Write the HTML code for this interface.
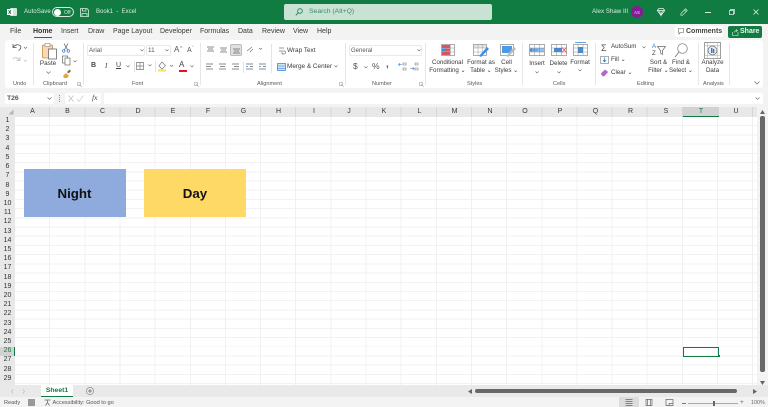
<!DOCTYPE html>
<html><head><meta charset="utf-8">
<style>
html,body{margin:0;padding:0;width:768px;height:407px;overflow:hidden;background:#f3f3f3;font-family:"Liberation Sans",sans-serif;color:#3a3a3a}
.a{position:absolute}
.t{position:absolute;white-space:nowrap;font-size:6.4px;line-height:8px;color:#3a3a3a}
.c{transform:translateX(-50%);text-align:center}
.w{color:#d9ebe0}
.tab{font-size:7px;color:#3a3a3a;top:28px}
.g{font-size:5.6px;top:80px;color:#5a5a5a}
.s{position:absolute;top:43px;width:1px;height:42px;background:#e6e6e6}
.h{font-size:7px;top:108px;color:#333;transform:translateX(-50%)}
.r{font-size:7px;left:2px;width:11px;text-align:center;color:#333}
svg{position:absolute;overflow:visible}
</style></head><body>
<div class="a" style="left:0;top:0;width:768px;height:24px;background:#107c41"></div>
<svg style="left:7px;top:7px" width="10" height="10" viewBox="0 0 10 10"><rect x="3" y="1" width="7" height="8" rx="1" fill="#cfe6d8"/><rect x="0" y="2" width="6" height="6" fill="#fff"/><path d="M1.5 3.3l2.5 3.4M4 3.3L1.5 6.7" stroke="#107c41" stroke-width=".9"/></svg>
<span class="t w" style="left:24px;top:8px;font-size:6.200px">AutoSave</span>
<div class="a" style="left:52px;top:7px;width:22px;height:10px;border:1px solid #d9ebe0;border-radius:6px;box-sizing:border-box"></div>
<div class="a" style="left:54px;top:8.500px;width:7px;height:7px;background:#fff;border-radius:50%"></div>
<span class="t w" style="left:64px;top:8.500px;font-size:5px">Off</span>
<svg style="left:80px;top:8px" width="9" height="9" viewBox="0 0 9 9"><path d="M.5.5h6.500l1.500 1.500v6.500h-8zM2.500.5v2.500h3.500v-2.500M2 8.500v-3h5v3" fill="none" stroke="#d9ebe0" stroke-width=".8"/></svg>
<span class="t w" style="left:96px;top:8px;font-size:6px">Book1&nbsp; -&nbsp; Excel</span>
<div class="a" style="left:284px;top:4px;width:208px;height:16px;background:#c8e3d3;border-radius:2px"></div>
<svg style="left:295px;top:8px" width="8" height="8" viewBox="0 0 8 8"><circle cx="5" cy="3" r="2.300" fill="none" stroke="#107c41" stroke-width=".8"/><path d="M3.300 4.700L.8 7.300" stroke="#107c41" stroke-width=".8"/></svg>
<span class="t" style="left:309px;top:8px;font-size:6.800px;color:#3f8a62">Search (Alt+Q)</span>
<span class="t w" style="left:592px;top:8px;font-size:6.200px">Alex Shaw III</span>
<div class="a" style="left:631px;top:6px;width:12px;height:12px;border-radius:50%;background:#861b97"></div>
<span class="t c" style="left:637px;top:8.500px;font-size:4.500px;color:#e6cfe9">AS</span>
<svg style="left:657px;top:8px" width="8" height="8" viewBox="0 0 8 8"><path d="M1.800.5h4.400L7.700 2.500 4 7.500.3 2.500zM.3 2.500h7.400M2.500 2.500L4 7.500l1.500-5" fill="none" stroke="#e8f3ec" stroke-width=".8"/></svg>
<svg style="left:680px;top:8px" width="8" height="8" viewBox="0 0 8 8"><path d="M1 5.500L5.500.8l1.700 1.700-4.700 4.700H.8zM4.500 2l1.700 1.700" fill="none" stroke="#d9ebe0" stroke-width=".7"/></svg>
<div class="a" style="left:705px;top:12px;width:6px;height:1px;background:#d9ebe0"></div>
<svg style="left:729px;top:9px" width="6" height="6" viewBox="0 0 6 6"><path d="M.5 1.500h4v4h-4zM1.500 1.500V.5h4v4h-1" fill="none" stroke="#e3f0e8" stroke-width=".7"/></svg>
<svg style="left:753px;top:9px" width="6" height="6" viewBox="0 0 6 6"><path d="M.5.5l5 5M5.500.5l-5 5" stroke="#e3f0e8" stroke-width=".8"/></svg>

<span class="t tab" style="left:10px">File</span>
<span class="t tab" style="left:33px;font-weight:bold;color:#333">Home</span>
<div class="a" style="left:34px;top:37px;width:18px;height:1px;background:#107c41"></div>
<span class="t tab" style="left:61px">Insert</span>
<span class="t tab" style="left:88px">Draw</span>
<span class="t tab" style="left:113px">Page Layout</span>
<span class="t tab" style="left:160px">Developer</span>
<span class="t tab" style="left:200px">Formulas</span>
<span class="t tab" style="left:238px">Data</span>
<span class="t tab" style="left:262px">Review</span>
<span class="t tab" style="left:293px">View</span>
<span class="t tab" style="left:317px">Help</span>
<div class="a" style="left:675px;top:26px;width:48px;height:11px;background:#fff;border-radius:2px"></div>
<svg style="left:678px;top:28px" width="7" height="7" viewBox="0 0 7 7"><path d="M.5.5h5v4H2.500L1 6V4.500H.5z" fill="none" stroke="#666" stroke-width=".6"/></svg>
<span class="t" style="left:686px;top:27.500px;font-size:7px;font-weight:bold;color:#444">Comments</span>
<div class="a" style="left:728px;top:26px;width:34px;height:12px;background:#107c41;border-radius:2px"></div>
<svg style="left:732px;top:28.500px" width="7" height="7" viewBox="0 0 7 7"><path d="M.5 3v3.500h5.500V3M2.500 3.500C2.500 2 4 1.500 5 1.500M4 .3l1.500 1.200L4 2.800" fill="none" stroke="#e3f0e8" stroke-width=".6"/></svg>
<span class="t" style="left:740px;top:28px;font-size:7px;font-weight:bold;color:#eef7f2">Share</span>

<div class="a" style="left:5px;top:40px;width:758px;height:48px;background:#fff;border-radius:3px"></div>
<div class="s" style="left:33px"></div><div class="s" style="left:83px"></div><div class="s" style="left:200px"></div><div class="s" style="left:345px"></div><div class="s" style="left:425px"></div><div class="s" style="left:522px"></div><div class="s" style="left:595px"></div><div class="s" style="left:698px"></div><div class="s" style="left:729px"></div>
<span class="t g" style="left:13px">Undo</span>
<span class="t g" style="left:43px">Clipboard</span>
<span class="t g" style="left:132px">Font</span>
<span class="t g" style="left:257px">Alignment</span>
<span class="t g" style="left:372px">Number</span>
<span class="t g" style="left:467px">Styles</span>
<span class="t g" style="left:553px">Cells</span>
<span class="t g" style="left:637px">Editing</span>
<span class="t g" style="left:703px">Analysis</span>

<!-- undo -->
<svg style="left:12px;top:43px" width="20" height="22" viewBox="0 0 20 22"><path d="M1 1v3.500h3.500M1.500 4C3 1.500 7 1 8.500 3c1 1.500 0 3.500-2 4.500" fill="none" stroke="#555" stroke-width=".8"/><path d="M8 14v3.500H4.500M7.500 17c-1.500-2.500-5-3-6.500-1" fill="none" stroke="#bbb" stroke-width=".8"/><path d="M12 4l1.500 1.500L15 4" fill="none" stroke="#666" stroke-width=".6"/><path d="M12 17l1.500 1.500L15 17" fill="none" stroke="#bbb" stroke-width=".6"/></svg>
<!-- clipboard -->
<svg style="left:42px;top:43px" width="16" height="17" viewBox="0 0 16 17"><rect x=".5" y="2" width="10" height="13" rx="1" fill="#f7d9b5" stroke="#c98a3c" stroke-width=".8"/><rect x="3" y=".5" width="5" height="3" fill="#fff" stroke="#888" stroke-width=".6"/><rect x="6.500" y="6" width="8" height="10" fill="#fff" stroke="#666" stroke-width=".8"/></svg>
<span class="t c" style="left:48px;top:60px;font-size:6.400px">Paste</span>
<svg style="left:46px;top:71px" width="5" height="3" viewBox="0 0 5 3"><path d="M.5.5l2 2 2-2" fill="none" stroke="#666" stroke-width=".6"/></svg>
<svg style="left:62px;top:43px" width="15" height="36" viewBox="0 0 15 36"><path d="M2 .5l4 7M6 .5l-4 7" stroke="#555" stroke-width=".7"/><circle cx="1.700" cy="8" r="1.300" fill="none" stroke="#2b7cd3" stroke-width=".7"/><circle cx="6.300" cy="8" r="1.300" fill="none" stroke="#2b7cd3" stroke-width=".7"/><rect x=".5" y="13" width="5" height="7" fill="#fff" stroke="#666" stroke-width=".7"/><rect x="3" y="15" width="5" height="7" fill="#fff" stroke="#666" stroke-width=".7"/><path d="M11.500 17.500l1.500 1.500 1.500-1.500" fill="none" stroke="#666" stroke-width=".6"/><path d="M1 33l3-3 3 3-2 2H2z" fill="#e8a33d"/><path d="M5 29l2.500-2.500L9 28l-2.500 2.500z" fill="#8a6a3a"/></svg>
<!-- font -->
<div class="a" style="left:87px;top:45px;width:58px;height:11px;border:1px solid #e9e9e9;border-radius:2px;box-sizing:border-box"></div>
<span class="t" style="left:89px;top:47px;color:#555">Arial</span>
<div class="a" style="left:146px;top:45px;width:25px;height:11px;border:1px solid #e9e9e9;border-radius:2px;box-sizing:border-box"></div>
<span class="t" style="left:148px;top:47px;color:#555">11</span>
<svg style="left:140px;top:49px" width="30" height="3" viewBox="0 0 30 3"><path d="M.5.5l1.500 1.500L3.500.5M25.500.5l1.500 1.500L28.500.5" fill="none" stroke="#666" stroke-width=".6"/></svg>
<span class="t" style="left:174px;top:46px;font-size:8px;color:#555">A</span><span class="t" style="left:180px;top:45px;font-size:5px;color:#2b7cd3">^</span>
<span class="t" style="left:187px;top:47px;font-size:7px;color:#555">A</span><span class="t" style="left:192px;top:45px;font-size:5px;color:#2b7cd3">ˇ</span>
<span class="t" style="left:91px;top:62px;font-size:7px;font-weight:bold;color:#444">B</span>
<span class="t" style="left:105px;top:62px;font-size:7px;font-style:italic;font-family:'Liberation Serif',serif;color:#444">I</span>
<span class="t" style="left:116px;top:62px;font-size:7px;text-decoration:underline;color:#444">U</span>
<svg style="left:126px;top:65px" width="5" height="3" viewBox="0 0 5 3"><path d="M.5.5l1.500 1.500L3.500.5" fill="none" stroke="#666" stroke-width=".6"/></svg>
<div class="a" style="left:134px;top:61px;width:1px;height:11px;background:#e3e3e3"></div>
<svg style="left:136px;top:62px" width="18" height="8" viewBox="0 0 18 8"><path d="M.5.5h7v7h-7zM4 .5v7M.5 4h7" fill="none" stroke="#777" stroke-width=".7"/><path d="M12.500 2.500l1.500 1.500 1.500-1.500" fill="none" stroke="#666" stroke-width=".6"/></svg>
<div class="a" style="left:155px;top:61px;width:1px;height:11px;background:#e3e3e3"></div>
<svg style="left:158px;top:61px" width="18" height="11" viewBox="0 0 18 11"><path d="M4 1l3.500 3.500L4 8 .8 4.800z" fill="none" stroke="#777" stroke-width=".7"/><rect x="0" y="8.500" width="8" height="2" fill="#ffd966"/><path d="M12 4l1.500 1.500L15 4" fill="none" stroke="#666" stroke-width=".6"/></svg>
<span class="t" style="left:179px;top:61px;font-size:8px;color:#444">A</span>
<div class="a" style="left:179px;top:69.500px;width:8px;height:2px;background:#e81123"></div>
<svg style="left:190px;top:65px" width="5" height="3" viewBox="0 0 5 3"><path d="M.5.5l1.500 1.500L3.500.5" fill="none" stroke="#666" stroke-width=".6"/></svg>
<svg style="left:77px;top:82px" width="5" height="5" viewBox="0 0 5 5"><path d="M.5.5h3v3h-3zM2 2l3 3" fill="none" stroke="#888" stroke-width=".5"/></svg>
<svg style="left:194px;top:82px" width="5" height="5" viewBox="0 0 5 5"><path d="M.5.5h3v3h-3zM2 2l3 3" fill="none" stroke="#888" stroke-width=".5"/></svg>
<!-- align -->
<div class="a" style="left:230px;top:44px;width:12px;height:12px;background:#e0e0e0;border:1px solid #bbb;border-radius:2px;box-sizing:border-box"></div>
<svg style="left:206px;top:46px" width="60" height="28" viewBox="0 0 60 28" stroke="#666" stroke-width=".7" fill="none"><path d="M1 1h7M2 3h5M1 5h7M14 2h7M15 4h5M14 6h7M27 3h7M28 5h5M27 7h7"/><path d="M0 18h7M0 20.500h5M0 23h7M13 18h7M14 20.500h5M13 23h7M26 18h7M28 20.500h5M26 23h7"/><path d="M40 18h7M44 20.500h3M40 23h7M53 18h7M57 20.500h3M53 23h7"/><path d="M40 20.500l2 0" stroke="#2b7cd3"/><path d="M53 20.500l2 0" stroke="#2b7cd3"/><path d="M41 5l5-4M44 6l3-3" stroke="#777"/><path d="M53 2l1.500 1.500L56 2" stroke="#666" stroke-width=".6"/></svg>
<div class="a" style="left:243px;top:62px;width:1px;height:11px;background:#e3e3e3"></div>
<div class="a" style="left:271px;top:44px;width:1px;height:29px;background:#e3e3e3"></div>
<svg style="left:278px;top:47px" width="8" height="8" viewBox="0 0 8 8"><path d="M1 1h5M1 4h5a1.500 1.500 0 010 3H4" fill="none" stroke="#777" stroke-width=".7"/><path d="M3 6l1.500 1-.2-2" fill="#2b7cd3"/></svg>
<span class="t" style="left:287px;top:47px;font-size:6.400px">Wrap Text</span>
<svg style="left:277px;top:63px" width="9" height="8" viewBox="0 0 9 8"><rect x=".5" y=".5" width="8" height="7" fill="#cfe3f5" stroke="#2b7cd3" stroke-width=".7"/><path d="M.5 3h8M.5 5.500h8" stroke="#2b7cd3" stroke-width=".6"/></svg>
<span class="t" style="left:287px;top:63px;font-size:6.400px">Merge &amp; Center</span>
<svg style="left:334px;top:65px" width="5" height="3" viewBox="0 0 5 3"><path d="M.5.5l1.500 1.500L3.500.5" fill="none" stroke="#666" stroke-width=".6"/></svg>
<svg style="left:339px;top:82px" width="5" height="5" viewBox="0 0 5 5"><path d="M.5.5h3v3h-3zM2 2l3 3" fill="none" stroke="#888" stroke-width=".5"/></svg>
<!-- number -->
<div class="a" style="left:349px;top:45px;width:73px;height:11px;border:1px solid #e9e9e9;border-radius:2px;box-sizing:border-box"></div>
<span class="t" style="left:351px;top:47px;font-size:6px;color:#555">General</span>
<svg style="left:417px;top:49px" width="5" height="3" viewBox="0 0 5 3"><path d="M.5.5l1.500 1.500L3.500.5" fill="none" stroke="#666" stroke-width=".6"/></svg>
<span class="t" style="left:353px;top:62px;font-size:8.500px;color:#555">$</span>
<svg style="left:364px;top:66px" width="5" height="3" viewBox="0 0 5 3"><path d="M.5.5l1.500 1.500L3.500.5" fill="none" stroke="#666" stroke-width=".6"/></svg>
<span class="t" style="left:372px;top:62px;font-size:8.500px;color:#555">%</span>
<span class="t" style="left:386px;top:61px;font-size:10px;font-weight:bold;color:#555">,</span>
<svg style="left:398px;top:62px" width="22" height="9" viewBox="0 0 22 9" fill="none" stroke="#777" stroke-width=".6"><path d="M5 1h3v2H5zM5 6h3v2H5zM17 1h3v2h-3zM17 6h3v2h-3z"/><path d="M4 2.500H.5M1.800 1.200L.5 2.500l1.300 1.300M16 6.500h-4M14.700 5.200L16 6.500l-1.300 1.300" stroke="#2b7cd3"/></svg>
<svg style="left:419px;top:82px" width="5" height="5" viewBox="0 0 5 5"><path d="M.5.5h3v3h-3zM2 2l3 3" fill="none" stroke="#888" stroke-width=".5"/></svg>
<!-- styles -->
<svg style="left:441px;top:44px" width="14" height="12" viewBox="0 0 14 12"><rect x=".5" y=".5" width="13" height="11" fill="#fff" stroke="#777" stroke-width=".6"/><rect x="1" y="1" width="8" height="3" fill="#e8505b"/><rect x="1" y="4.500" width="4" height="3" fill="#3a8ee6"/><rect x="5" y="4.500" width="4" height="3" fill="#e8505b"/><rect x="1" y="8" width="8" height="3" fill="#e8505b"/><path d="M5 .5v11M9.500.5v11M.5 4h13M.5 8h13" stroke="#777" stroke-width=".4"/></svg>
<span class="t c" style="left:447.500px;top:59px;font-size:6.200px">Conditional</span>
<span class="t c" style="left:447.500px;top:67px;font-size:6.200px">Formatting ⌄</span>
<svg style="left:473px;top:44px" width="16" height="13" viewBox="0 0 16 13"><rect x=".5" y=".5" width="13" height="11" fill="#fff" stroke="#777" stroke-width=".6"/><rect x="1" y="1" width="12" height="3" fill="#dbe7f3"/><path d="M5 .5v11M9.500.5v11M.5 4h13M.5 8h13" stroke="#888" stroke-width=".4"/><path d="M6 12l8-9 2 2-8 8z" fill="#3a8ee6"/></svg>
<span class="t c" style="left:481px;top:59px;font-size:6.200px">Format as</span>
<span class="t c" style="left:481px;top:67px;font-size:6.200px">Table ⌄</span>
<svg style="left:500px;top:44px" width="16" height="13" viewBox="0 0 16 13"><rect x=".5" y=".5" width="13" height="11" fill="#fff" stroke="#777" stroke-width=".6"/><rect x="2" y="2" width="10" height="7" fill="#4a9ae8"/><path d="M6 12l8-9 2 2-8 8z" fill="#bbb"/></svg>
<span class="t c" style="left:506.500px;top:59px;font-size:6.200px">Cell</span>
<span class="t c" style="left:506.500px;top:67px;font-size:6.200px">Styles ⌄</span>
<!-- cells -->
<svg style="left:529px;top:44px" width="16" height="12" viewBox="0 0 16 12"><rect x=".5" y=".5" width="15" height="11" fill="#fff" stroke="#777" stroke-width=".6"/><rect x="1" y="4" width="14" height="4" fill="#8ec1ef"/><path d="M5.500.5v11M10.500.5v11M.5 4h15M.5 8h15" stroke="#777" stroke-width=".4"/><path d="M9 6H1M3 4.500L1 6l2 1.500" fill="none" stroke="#2b7cd3" stroke-width=".7"/></svg>
<span class="t c" style="left:537px;top:60px;font-size:6.200px">Insert</span>
<svg style="left:535px;top:71px" width="5" height="3" viewBox="0 0 5 3"><path d="M.5.5l1.500 1.500L3.500.5" fill="none" stroke="#666" stroke-width=".6"/></svg>
<svg style="left:551px;top:44px" width="16" height="12" viewBox="0 0 16 12"><rect x=".5" y=".5" width="15" height="11" fill="#fff" stroke="#777" stroke-width=".6"/><rect x="3" y="4" width="8" height="4" fill="#3a8ee6"/><path d="M5.500.5v11M10.500.5v11M.5 4h15M.5 8h15" stroke="#777" stroke-width=".4"/><path d="M11 3.500l4.500 5M15.500 3.500l-4.500 5" stroke="#e8505b" stroke-width=".9"/></svg>
<span class="t c" style="left:558.500px;top:60px;font-size:6.200px">Delete</span>
<svg style="left:557px;top:71px" width="5" height="3" viewBox="0 0 5 3"><path d="M.5.5l1.500 1.500L3.500.5" fill="none" stroke="#666" stroke-width=".6"/></svg>
<svg style="left:573px;top:42px" width="15" height="14" viewBox="0 0 15 14"><path d="M2 .5h11" stroke="#2b7cd3" stroke-width=".7"/><rect x=".5" y="2.500" width="14" height="11" fill="#fff" stroke="#777" stroke-width=".6"/><rect x="5" y="5" width="5" height="6" fill="#3a8ee6"/><path d="M5 2.500v11M10 2.500v11M.5 6h14M.5 10h14" stroke="#777" stroke-width=".4"/></svg>
<span class="t c" style="left:580px;top:59px;font-size:6.200px">Format</span>
<svg style="left:578px;top:69px" width="5" height="3" viewBox="0 0 5 3"><path d="M.5.5l1.500 1.500L3.500.5" fill="none" stroke="#666" stroke-width=".6"/></svg>
<!-- editing -->
<span class="t" style="left:601px;top:43px;font-size:9px;line-height:10px;color:#555">Σ</span>
<span class="t" style="left:611px;top:43px;font-size:6.200px">AutoSum</span>
<svg style="left:642px;top:46px" width="5" height="3" viewBox="0 0 5 3"><path d="M.5.5l1.500 1.500L3.500.5" fill="none" stroke="#666" stroke-width=".6"/></svg>
<svg style="left:600px;top:56px" width="9" height="8" viewBox="0 0 9 8"><rect x=".5" y=".5" width="8" height="7" fill="#fff" stroke="#777" stroke-width=".6"/><path d="M4.500 1.500v4M2.800 4l1.700 1.800L6.200 4" fill="none" stroke="#2b7cd3" stroke-width=".8"/></svg>
<span class="t" style="left:611px;top:56px;font-size:6.200px">Fill ⌄</span>
<svg style="left:600px;top:68px" width="9" height="9" viewBox="0 0 9 9"><path d="M.8 5.500L5 1.500l3.200 2.500-4 4.200H2.500z" fill="#b565c9"/></svg>
<span class="t" style="left:611px;top:69px;font-size:6.200px">Clear ⌄</span>
<span class="t" style="left:652px;top:43px;font-size:6.200px;color:#2b7cd3;line-height:7px">A</span>
<span class="t" style="left:652px;top:50px;font-size:6.200px;line-height:7px;color:#444">Z</span>
<svg style="left:657px;top:46px" width="9" height="9" viewBox="0 0 9 9"><path d="M.5.500h8L5.500 4.500v4L3.500 7V4.500z" fill="none" stroke="#666" stroke-width=".7"/></svg>
<svg style="left:674px;top:43px" width="14" height="15" viewBox="0 0 14 15"><circle cx="8.500" cy="5.500" r="4.800" fill="none" stroke="#777" stroke-width=".7"/><path d="M5 9l-4 5" stroke="#777" stroke-width=".9"/></svg>
<span class="t c" style="left:658.500px;top:59px;font-size:6.200px">Sort &amp;</span>
<span class="t c" style="left:658.500px;top:67px;font-size:6.200px">Filter ⌄</span>
<span class="t c" style="left:681px;top:59px;font-size:6.200px">Find &amp;</span>
<span class="t c" style="left:681px;top:67px;font-size:6.200px">Select ⌄</span>
<!-- analyze -->
<svg style="left:704px;top:42px" width="17" height="17" viewBox="0 0 17 17"><rect x=".5" y=".5" width="16" height="16" fill="#fff" stroke="#777" stroke-width=".7"/><path d="M.5 3.500h16M.5 13.500h16M3.500.5v16M13.500.5v16" stroke="#999" stroke-width=".4"/><circle cx="8.500" cy="8.500" r="4.500" fill="#e8eef5" stroke="#666" stroke-width=".7"/><rect x="7" y="6" width="1.500" height="5" fill="#2b7cd3"/><rect x="9" y="7" width="1.300" height="4" fill="#666"/></svg>
<span class="t c" style="left:712.500px;top:59px;font-size:6.200px">Analyze</span>
<span class="t c" style="left:712.500px;top:67px;font-size:6.200px">Data</span>
<svg style="left:754px;top:81px" width="6" height="4" viewBox="0 0 6 4"><path d="M.5.500L3 3 5.500.5" fill="none" stroke="#666" stroke-width=".7"/></svg>

<!-- formula bar -->
<div class="a" style="left:5px;top:93px;width:49px;height:11px;background:#fff;border-radius:2px"></div>
<span class="t" style="left:7px;top:94.500px;font-size:6.800px;font-weight:bold;color:#555">T26</span>
<svg style="left:47px;top:97px" width="5" height="3" viewBox="0 0 5 3"><path d="M.5.5l2 1.800 2-1.800" fill="none" stroke="#666" stroke-width=".6"/></svg>
<div class="a" style="left:59px;top:95px;width:1px;height:7px;border-left:1px dotted #888"></div>
<div class="a" style="left:65px;top:93px;width:36px;height:11px;background:#fff;border-radius:2px"></div>
<svg style="left:68px;top:95px" width="16" height="7" viewBox="0 0 16 7"><path d="M.5.500l5 6M5.500.500l-5 6" stroke="#bbb" stroke-width=".6"/><path d="M9 4l2 2.500L15.500.5" fill="none" stroke="#bbb" stroke-width=".6"/></svg>
<span class="t" style="left:92px;top:94px;font-size:7.500px;font-style:italic;font-family:'Liberation Serif',serif;color:#444">fx</span>
<div class="a" style="left:104px;top:93px;width:659px;height:11px;background:#fff;border-radius:2px"></div>
<svg style="left:755px;top:97px" width="5" height="3" viewBox="0 0 5 3"><path d="M.5.5l2 1.800 2-1.800" fill="none" stroke="#666" stroke-width=".6"/></svg>

<!-- grid -->
<div class="a" style="left:15px;top:116.500px;width:742px;height:268.500px;background-color:#fff;background-image:repeating-linear-gradient(to right,transparent 0,transparent 34.150px,#f0f0f0 34.150px,#f0f0f0 35.150px),repeating-linear-gradient(to bottom,transparent 0,transparent 8.210px,#f2f2f2 8.210px,#f2f2f2 9.210px)"></div>
<div class="a" style="left:0;top:107px;width:15px;height:278px;background:#e8e8e8"></div>
<div class="a" style="left:15px;top:107px;width:742px;height:9.500px;background:#e8e8e8;background-image:repeating-linear-gradient(to right,transparent 0,transparent 34.150px,#d6d6d6 34.150px,#d6d6d6 35.150px)"></div>
<svg style="left:8px;top:109px" width="6" height="6" viewBox="0 0 6 6"><path d="M5.500.5v5h-5z" fill="#b5b5b5"/></svg>
<div class="a" style="left:683px;top:107px;width:36px;height:9.500px;background:#d2d2d2;border-bottom:1px solid #107c41;box-sizing:border-box"></div>
<div class="a" style="left:0;top:346.500px;width:15px;height:9.500px;background:#d2d2d2;border-right:1px solid #107c41;box-sizing:border-box"></div>

<span class="t h" style="left:32.500px">A</span><span class="t h" style="left:67.500px">B</span><span class="t h" style="left:102.500px">C</span><span class="t h" style="left:138px">D</span><span class="t h" style="left:173px">E</span><span class="t h" style="left:208px">F</span><span class="t h" style="left:243.500px">G</span><span class="t h" style="left:278.500px">H</span><span class="t h" style="left:314px">I</span><span class="t h" style="left:349px">J</span><span class="t h" style="left:384px">K</span><span class="t h" style="left:419.500px">L</span><span class="t h" style="left:454.500px">M</span><span class="t h" style="left:490px">N</span><span class="t h" style="left:525px">O</span><span class="t h" style="left:560px">P</span><span class="t h" style="left:595.500px">Q</span><span class="t h" style="left:630.500px">R</span><span class="t h" style="left:666px">S</span><span class="t h" style="left:701px;color:#107c41">T</span><span class="t h" style="left:736px">U</span>

<span class="t r" style="top:117px">1</span><span class="t r" style="top:126.200px">2</span><span class="t r" style="top:135.400px">3</span><span class="t r" style="top:144.600px">4</span><span class="t r" style="top:153.800px">5</span><span class="t r" style="top:163px">6</span><span class="t r" style="top:172.300px">7</span><span class="t r" style="top:181.500px">8</span><span class="t r" style="top:190.700px">9</span><span class="t r" style="top:199.900px">10</span><span class="t r" style="top:209.100px">11</span><span class="t r" style="top:218.300px">12</span><span class="t r" style="top:227.500px">13</span><span class="t r" style="top:236.700px">14</span><span class="t r" style="top:245.900px">15</span><span class="t r" style="top:255.200px">16</span><span class="t r" style="top:264.400px">17</span><span class="t r" style="top:273.600px">18</span><span class="t r" style="top:282.800px">19</span><span class="t r" style="top:292px">20</span><span class="t r" style="top:301.200px">21</span><span class="t r" style="top:310.400px">22</span><span class="t r" style="top:319.600px">23</span><span class="t r" style="top:328.800px">24</span><span class="t r" style="top:338px">25</span><span class="t r" style="top:347.200px;color:#107c41">26</span><span class="t r" style="top:356.400px">27</span><span class="t r" style="top:365.700px">28</span><span class="t r" style="top:374.900px">29</span>

<!-- shapes -->
<div class="a" style="left:23.500px;top:169px;width:102px;height:48px;background:#8faadc;box-sizing:border-box"></div>
<span class="t c" style="left:74.500px;top:186px;font-size:13.300px;line-height:15px;font-weight:bold;color:#111">Night</span>
<div class="a" style="left:144px;top:169px;width:102px;height:48px;background:#ffd966;box-sizing:border-box"></div>
<span class="t c" style="left:195px;top:186px;font-size:13.300px;line-height:15px;font-weight:bold;color:#111">Day</span>
<div class="a" style="left:683px;top:346.500px;width:36px;height:10px;border:1px solid #107c41;box-sizing:border-box"></div>
<div class="a" style="left:717.500px;top:355px;width:2px;height:2px;background:#107c41"></div>

<!-- scrollbars -->
<div class="a" style="left:757px;top:107px;width:11px;height:278px;background:#f3f3f3"></div>
<div class="a" style="left:760px;top:116px;width:5px;height:256px;background:#686868;border-radius:2px"></div>
<svg style="left:760px;top:110px" width="5" height="4" viewBox="0 0 5 4"><path d="M2.500 0L5 4H0z" fill="#666"/></svg>
<svg style="left:760px;top:381px" width="5" height="4" viewBox="0 0 5 4"><path d="M2.500 4L5 0H0z" fill="#666"/></svg>
<div class="a" style="left:0;top:385px;width:768px;height:12px;background:#e9e9e9"></div>
<div class="a" style="left:475px;top:389px;width:262px;height:4px;background:#686868;border-radius:2px"></div>
<svg style="left:753px;top:389px" width="4" height="5" viewBox="0 0 4 5"><path d="M4 2.500L0 5V0z" fill="#666"/></svg>
<svg style="left:468px;top:389px" width="4" height="5" viewBox="0 0 4 5"><path d="M0 2.500L4 5V0z" fill="#666"/></svg>
<svg style="left:11px;top:389px" width="14" height="5" viewBox="0 0 14 5"><path d="M2 .5L.5 2.500 2 4.500M12 .5l1.500 2L12 4.500" fill="none" stroke="#bbb" stroke-width=".7"/></svg>
<div class="a" style="left:41px;top:385px;width:32px;height:12px;background:#fff;border-bottom:1px solid #107c41;box-sizing:border-box"></div>
<span class="t c" style="left:57px;top:386.500px;font-size:6.800px;font-weight:bold;color:#107c41">Sheet1</span>
<svg style="left:86px;top:387px" width="8" height="8" viewBox="0 0 8 8"><circle cx="4" cy="4" r="3.600" fill="none" stroke="#777" stroke-width=".6"/><path d="M4 2v4M2 4h4" stroke="#666" stroke-width=".7"/></svg>

<!-- status -->
<div class="a" style="left:0;top:397px;width:768px;height:10px;background:#f3f3f3"></div>
<span class="t" style="left:4px;top:399px;font-size:5.600px;color:#555">Ready</span>
<div class="a" style="left:28px;top:399px;width:7px;height:7px;background:#999"></div>
<svg style="left:44px;top:399px" width="7" height="7" viewBox="0 0 7 7"><path d="M.5 1h6M3.500 1v2.500M1.500 6.500l2-3 2 3" fill="none" stroke="#666" stroke-width=".7"/></svg>
<span class="t" style="left:52.500px;top:399px;font-size:5.600px;color:#555">Accessibility: Good to go</span>
<div class="a" style="left:619px;top:397px;width:20px;height:10px;background:#dcdcdc"></div>
<svg style="left:625px;top:399px" width="50" height="7" viewBox="0 0 50 7" fill="none" stroke="#666" stroke-width=".7"><path d="M.5.500h7M.5 2.500h7M.5 4.500h7M.5 6.500h7"/><path d="M21 .5h6v6h-6zM22.500.5v6M25.500.5v6"/><path d="M41 .5h7v6h-7zM44 4.500h4M44 4.500v2"/></svg>
<div class="a" style="left:682px;top:402.500px;width:4px;height:1px;background:#777"></div>
<div class="a" style="left:688px;top:403px;width:50px;height:1px;background:#aaa"></div>
<div class="a" style="left:713px;top:400.500px;width:2px;height:5px;background:#666"></div>
<span class="t" style="left:740px;top:399px;font-size:6.500px;color:#666">+</span>
<span class="t" style="left:751px;top:399px;font-size:5.400px;color:#666">100%</span>
</body></html>
